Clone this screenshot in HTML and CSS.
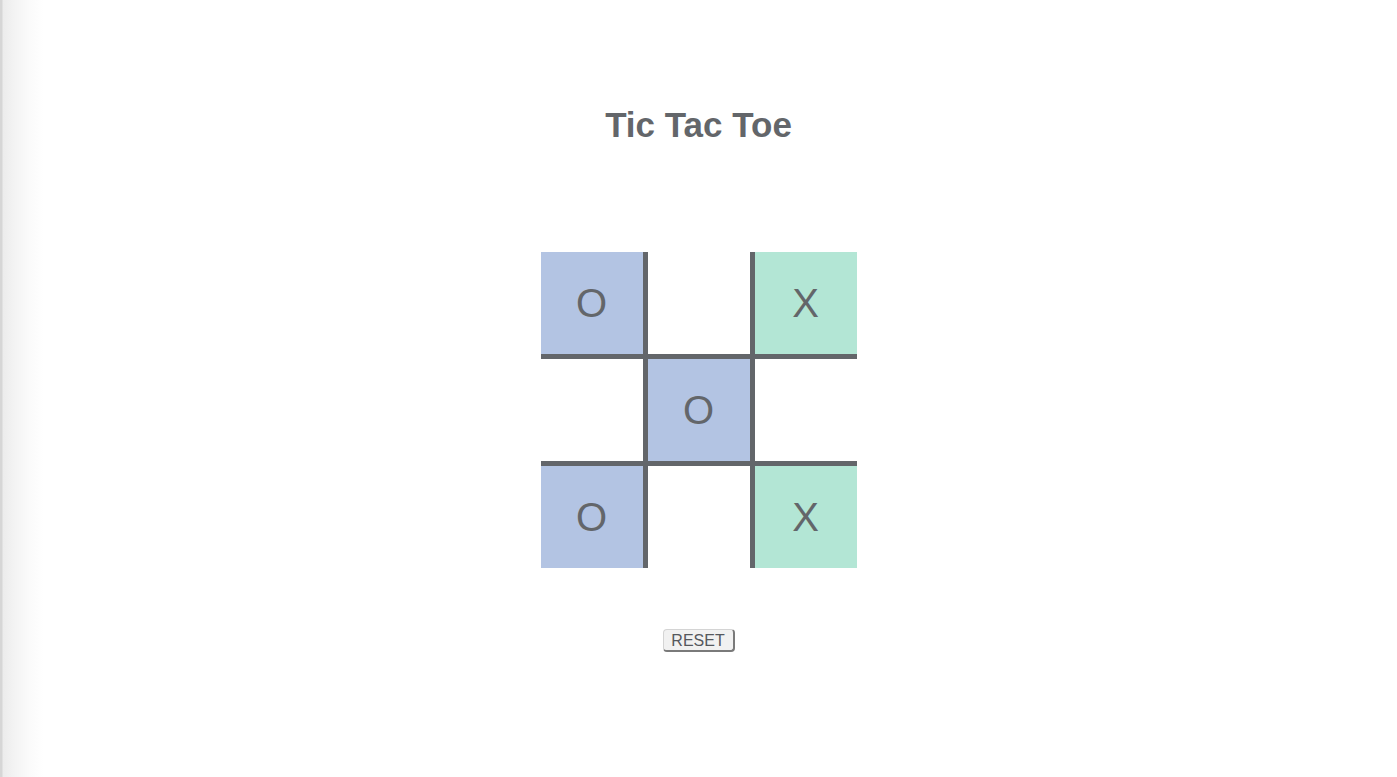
FILE: index.html
```html
<!DOCTYPE html>
<html lang="en">
<head>
<meta charset="utf-8">
<title>Tic Tac Toe</title>
<link rel="stylesheet" href="styles.css">
</head>
<body>
<div class="edge"></div>
<main class="page">
  <h1 class="title">Tic Tac Toe</h1>
  <div class="board">
    <div class="cell o">O</div>
    <div class="cell"></div>
    <div class="cell x">X</div>
    <div class="cell"></div>
    <div class="cell o">O</div>
    <div class="cell"></div>
    <div class="cell o">O</div>
    <div class="cell"></div>
    <div class="cell x">X</div>
  </div>
  <button class="reset" type="button">RESET</button>
</main>
</body>
</html>
```

FILE: styles.css
```css
html, body {
  margin: 0;
  padding: 0;
  background: #ffffff;
  height: 100%;
}

body {
  font-family: "Liberation Sans", Arial, Helvetica, sans-serif;
  color: #63666a;
}

.edge {
  position: fixed;
  left: 0;
  top: 0;
  bottom: 0;
  width: 44px;
  background: linear-gradient(to right, #d6d6d6 0px, #d6d6d6 2px, #ececec 3px, #f3f3f3 14px, #fbfbfb 30px, #ffffff 44px);
  pointer-events: none;
}

.page {
  display: flex;
  flex-direction: column;
  align-items: center;
  padding-top: 105px;
}

.title {
  margin: 0;
  font-size: 35px;
  line-height: 40px;
  font-weight: bold;
  color: #63666a;
}

.board {
  margin-top: 107px;
  display: grid;
  grid-template-columns: repeat(3, 102px);
  grid-template-rows: repeat(3, 102px);
  gap: 5px;
  background: #63666a;
}

.cell {
  background: #ffffff;
  display: flex;
  align-items: center;
  justify-content: center;
  font-size: 40px;
  color: #63666a;
}

.cell.o {
  background: #b3c4e3;
}

.cell.x {
  background: #b3e6d5;
}

.reset {
  margin-top: 61px;
  font-family: "Liberation Sans", Arial, Helvetica, sans-serif;
  font-size: 16px;
  line-height: 19px;
  color: #55585d;
  background: #f1f1f1;
  border-style: solid;
  border-width: 1px 2px 2px 1px;
  border-color: #d4d4d4 #7a7a7a #7a7a7a #d4d4d4;
  border-radius: 4px;
  padding: 1px 9px 1px 9px;
  width: 72px;
  height: 23px;
  box-sizing: border-box;
  display: flex;
  align-items: center;
  justify-content: center;
}
```
